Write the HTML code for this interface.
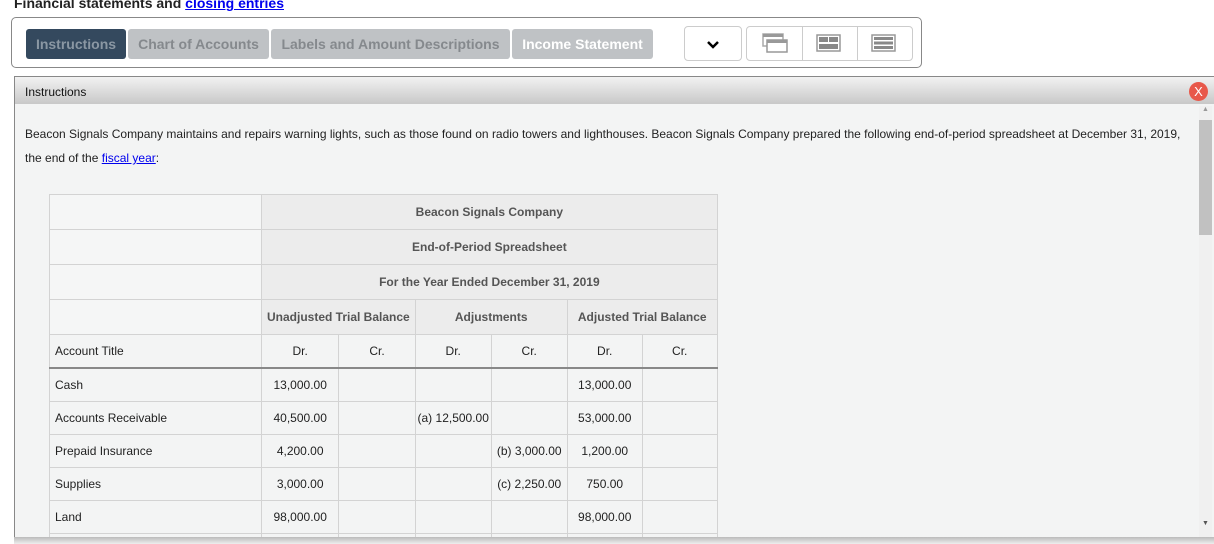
<!DOCTYPE html><html style="overflow:hidden;height:544px"><head><style>
body{margin:0;width:1214px;height:544px;overflow:hidden;background:#fff;font-family:"Liberation Sans",Arial,sans-serif;position:relative}
.a{position:absolute}
.tab{position:absolute;top:29px;height:30px;line-height:30px;border-radius:3px;background:#bfc2c5;color:#85898d;font-weight:bold;font-size:14px;text-align:center}
table{border-collapse:collapse;position:absolute;left:49px;top:194px;font-size:12px;color:#222;table-layout:fixed}
td{border:1px solid #d3d3d3;padding:0 5px;white-space:nowrap}
tr.h td{height:34px;background:#ececec;text-align:center;font-weight:bold;color:#555}
tr.h td:first-child{background:#f5f6f6}
tr.c td{height:32px;text-align:center;background:#f3f4f4}
tr.c td:first-child{text-align:left}
tr.c{border-bottom:2px solid #888}
tr.d td{height:32px;text-align:center;background:#f3f4f4}
tr.d td:first-child{text-align:left}
</style></head><body>
<div class="a" style="left:14px;top:-5px;font-size:14px;font-weight:bold;color:#222">Financial statements and <span style="color:#00e;text-decoration:underline">closing entries</span></div>
<div class="a" style="left:11px;top:17px;width:909px;height:49px;border:1px solid #888;border-radius:5px"></div>
<div class="tab" style="left:26px;width:100px;background:#34495e;color:#8a97a3">Instructions</div>
<div class="tab" style="left:128px;width:141px">Chart of Accounts</div>
<div class="tab" style="left:271px;width:239px">Labels and Amount Descriptions</div>
<div class="tab" style="left:512px;width:141px;color:#fff">Income Statement</div>
<div class="a" style="left:684px;top:26px;width:56px;height:33px;border:1px solid #ccc;border-radius:4px;text-align:center">
<svg width="14" height="10" style="margin-top:13px"><path d="M2 2 L7 7 L12 2" stroke="#000" stroke-width="2.5" fill="none"/></svg></div>
<div class="a" style="left:746px;top:26px;width:165px;height:33px;border:1px solid #ccc;border-radius:4px"></div>
<div class="a" style="left:802px;top:26px;width:1px;height:35px;background:#ccc"></div>
<div class="a" style="left:857px;top:26px;width:1px;height:35px;background:#ccc"></div>
<svg class="a" style="left:762px;top:33px" width="26" height="20"><rect x="1" y="1" width="20" height="12" fill="#fff" stroke="#aaa" stroke-width="1.5"/><rect x="1" y="1" width="20" height="3" fill="#999"/><rect x="5" y="7" width="20" height="12" fill="#fff" stroke="#999" stroke-width="1.5"/><rect x="5" y="7" width="20" height="3" fill="#999"/></svg>
<svg class="a" style="left:816px;top:34px" width="26" height="18"><rect x="1" y="1" width="23" height="16" fill="#fff" stroke="#999" stroke-width="1.5"/><rect x="3" y="3" width="9" height="5" fill="#888"/><rect x="13" y="3" width="9" height="5" fill="#888"/><rect x="3" y="10" width="19" height="5" fill="#888"/></svg>
<svg class="a" style="left:871px;top:34px" width="26" height="18"><rect x="1" y="1" width="23" height="16" fill="#fff" stroke="#999" stroke-width="1.5"/><rect x="3" y="3" width="19" height="3" fill="#888"/><rect x="3" y="7.5" width="19" height="3" fill="#888"/><rect x="3" y="12" width="19" height="3" fill="#888"/></svg>
<div class="a" style="left:14px;top:76px;width:1200px;height:462px;background:#f3f4f4;border-top:1px solid #888;border-left:1px solid #888;overflow:hidden">
<table style="left:34px;top:117px">
<colgroup><col style="width:212px"><col style="width:77px"><col style="width:76px"><col style="width:76px"><col style="width:76px"><col style="width:75px"><col style="width:75px"></colgroup>
<tr class="h"><td></td><td colspan="6">Beacon Signals Company</td></tr>
<tr class="h"><td></td><td colspan="6">End-of-Period Spreadsheet</td></tr>
<tr class="h"><td></td><td colspan="6">For the Year Ended December 31, 2019</td></tr>
<tr class="h"><td></td><td colspan="2">Unadjusted Trial Balance</td><td colspan="2">Adjustments</td><td colspan="2">Adjusted Trial Balance</td></tr>
<tr class="c"><td>Account Title</td><td>Dr.</td><td>Cr.</td><td>Dr.</td><td>Cr.</td><td>Dr.</td><td>Cr.</td></tr>
<tr class="d"><td>Cash</td><td>13,000.00</td><td></td><td></td><td></td><td>13,000.00</td><td></td></tr>
<tr class="d"><td>Accounts Receivable</td><td>40,500.00</td><td></td><td style="padding:0 1px">(a) 12,500.00</td><td></td><td>53,000.00</td><td></td></tr>
<tr class="d"><td>Prepaid Insurance</td><td>4,200.00</td><td></td><td></td><td style="padding:0 2px">(b) 3,000.00</td><td>1,200.00</td><td></td></tr>
<tr class="d"><td>Supplies</td><td>3,000.00</td><td></td><td></td><td style="padding:0 2px">(c) 2,250.00</td><td>750.00</td><td></td></tr>
<tr class="d"><td>Land</td><td>98,000.00</td><td></td><td></td><td></td><td>98,000.00</td><td></td></tr>
<tr class="d"><td></td><td></td><td></td><td></td><td></td><td></td><td></td></tr>
</table>
</div>
<div class="a" style="left:15px;top:77px;width:1199px;height:27px;background:linear-gradient(#f2f2f2,#c8c8c8)"></div>
<div class="a" style="left:25px;top:85px;font-size:12px;color:#111">Instructions</div>
<div class="a" style="left:1189px;top:82px;width:19px;height:19px;border-radius:50%;background:#e8584a;color:#fff;font-size:13px;text-align:center;line-height:19px">X</div>
<div class="a" style="left:1199px;top:106px;width:13px;height:432px;background:#f0f0f0"></div>
<div class="a" style="left:1199px;top:120px;width:13px;height:115px;background:#c1c1c1"></div>
<div class="a" style="left:1202px;top:106px;font-size:7px;color:#999">▲</div>
<div class="a" style="left:1202px;top:520px;font-size:7px;color:#555">▼</div>
<div class="a" style="left:25px;top:122px;width:1165px;font-size:12px;line-height:24px;color:#222">Beacon Signals Company maintains and repairs warning lights, such as those found on radio towers and lighthouses. Beacon Signals Company prepared the following end-of-period spreadsheet at December 31, 2019, the end of the <span style="color:#00e;text-decoration:underline">fiscal year</span>:</div>
<div class="a" style="left:14px;top:537px;width:1200px;height:7px;background:linear-gradient(#bbb,#eee)"></div>
</body></html>
